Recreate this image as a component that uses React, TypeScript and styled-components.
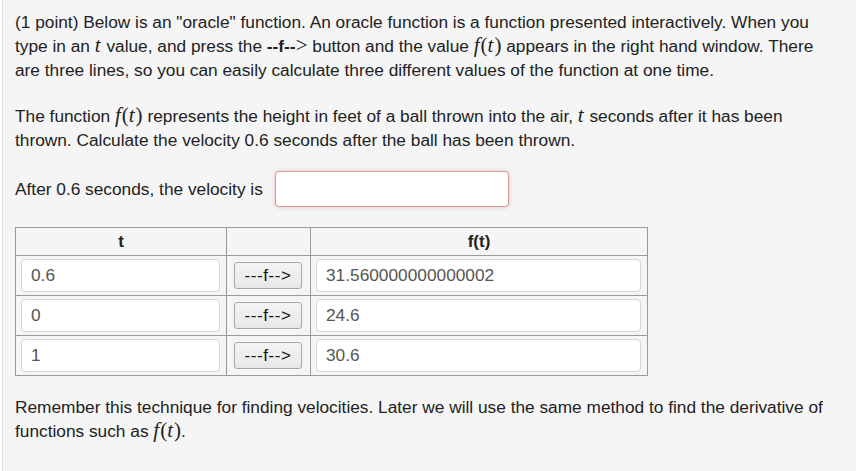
import React from "react";
import styled, { createGlobalStyle } from "styled-components";

const Global = createGlobalStyle`
  html, body { margin: 0; padding: 0; background: #ffffff; }
  body { font-family: "Liberation Sans", Arial, sans-serif; }
`;

const Page = styled.div`
  margin-left: 2px;
  min-height: 471px;
  box-sizing: border-box;
  background: #f5f5f5;
  border-left: 1px solid #e2e2e2;
  padding: 10px 15px 10px 12px;
  color: #222;
  font-size: 17.3px;
  line-height: 24px;
`;

const P = styled.p<{ $mb?: number }>`
  margin: 0 0 ${(p) => p.$mb ?? 22}px 0;
`;

const M = styled.span`
  font-family: "Liberation Serif", "Times New Roman", serif;
  font-size: 21px;
  line-height: 0;
`;
const MI = styled.i`
  font-family: "Liberation Serif", "Times New Roman", serif;
  font-style: italic;
  padding-right: 1px;
`;

const AnswerRow = styled.div`
  display: flex;
  align-items: center;
  gap: 12px;
  margin-bottom: 20px;
`;

const AnswerBox = styled.input`
  width: 234px;
  height: 36px;
  box-sizing: border-box;
  border: 1px solid #d39a9a;
  border-radius: 4px;
  background: #fff;
  box-shadow: 0 0 4px rgba(220, 120, 120, 0.45);
  outline: none;
`;

const Table = styled.table`
  border-collapse: collapse;
  width: 633px;
  margin-bottom: 19px;
`;

const Th = styled.th<{ $w?: number }>`
  border: 1px solid #9a9a9a;
  height: 27px;
  padding: 0;
  font-size: 17px;
  font-weight: bold;
  text-align: center;
  ${(p) => (p.$w ? `width: ${p.$w}px;` : "")}
`;

const Td = styled.td<{ $center?: boolean }>`
  border: 1px solid #9a9a9a;
  height: 40px;
  padding: 0 6px 0 5px;
  box-sizing: border-box;
  text-align: ${(p) => (p.$center ? "center" : "left")};
`;

const CellInput = styled.input`
  width: 100%;
  height: 33px;
  box-sizing: border-box;
  border: 1px solid #d6d6d6;
  border-radius: 4px;
  background: #fff;
  padding: 0 9px;
  font-family: "Liberation Sans", Arial, sans-serif;
  font-size: 17.3px;
  color: #555;
  outline: none;
`;

const FButton = styled.button`
  width: 68px;
  height: 27px;
  border: 1px solid #a8a8a8;
  border-radius: 3px;
  background: linear-gradient(#f4f4f4, #e8e8e8);
  font-family: "Liberation Sans", Arial, sans-serif;
  font-size: 17px;
  letter-spacing: 0.6px;
  color: #111;
  padding: 0;
`;

const rows = [
  { t: "0.6", f: "31.560000000000002" },
  { t: "0", f: "24.6" },
  { t: "1", f: "30.6" },
];

const Ft = () => (
  <M>
    <MI>f</MI>(<MI>t</MI>)
  </M>
);

export default function App() {
  return (
    <>
      <Global />
      <Page>
        <P>
          (1 point) Below is an "oracle" function. An oracle function is a function presented interactively. When you
          type in an <M><MI>t</MI></M> value, and press the <b>--f--</b><M>&gt;</M> button and the value <Ft /> appears in the right hand window. There
          are three lines, so you can easily calculate three different values of the function at one time.
        </P>
        <P $mb={19}>
          The function <Ft /> represents the height in feet of a ball thrown into the air, <M><MI>t</MI></M> seconds after it has been
          thrown. Calculate the velocity 0.6 seconds after the ball has been thrown.
        </P>
        <AnswerRow>
          <span>After 0.6 seconds, the velocity is</span>
          <AnswerBox />
        </AnswerRow>
        <Table>
          <thead>
            <tr>
              <Th $w={210}>t</Th>
              <Th $w={83}></Th>
              <Th>f(t)</Th>
            </tr>
          </thead>
          <tbody>
            {rows.map((r) => (
              <tr key={r.t}>
                <Td>
                  <CellInput defaultValue={r.t} />
                </Td>
                <Td $center>
                  <FButton>---f--&gt;</FButton>
                </Td>
                <Td>
                  <CellInput defaultValue={r.f} />
                </Td>
              </tr>
            ))}
          </tbody>
        </Table>
        <P>
          Remember this technique for finding velocities. Later we will use the same method to find the derivative of
          functions such as <Ft />.
        </P>
      </Page>
    </>
  );
}
